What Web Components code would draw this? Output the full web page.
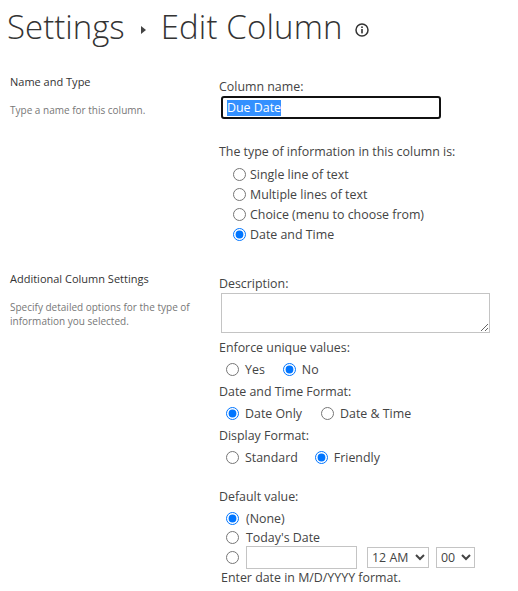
<!DOCTYPE html>
<html lang="en">
<head>
<meta charset="utf-8">
<title>Edit Column</title>
<style>
	html, body { margin: 0; padding: 0; background: #fff; overflow: hidden; }
	body { font-family: "Open Sans", "Noto Sans", sans-serif; color: #444; }
</style>
</head>
<body>
<edit-column-page>
	<page-title slot="title"></page-title>

	<form-section heading="Name and Type" desc="Type a name for this column." style="--section-top: 20px">
		<form-label>Column name:</form-label>
		<name-field value="Due Date"></name-field>
		<form-label style="--label-top: 22px">The type of information in this column is:</form-label>
		<radio-group stacked indent="14" name="type">
			<radio-option>Single line of text</radio-option>
			<radio-option>Multiple lines of text</radio-option>
			<radio-option>Choice (menu to choose from)</radio-option>
			<radio-option checked>Date and Time</radio-option>
		</radio-group>
	</form-section>

	<form-section heading="Additional Column Settings" desc="Specify detailed options for the type of information you selected." style="--section-top: 27px">
		<form-label>Description:</form-label>
		<text-box></text-box>
		<form-label style="--label-top: 4px">Enforce unique values:</form-label>
		<radio-group indent="7" name="unique">
			<radio-option gap="18">Yes</radio-option>
			<radio-option checked>No</radio-option>
		</radio-group>
		<form-label>Date and Time Format:</form-label>
		<radio-group indent="7" name="format">
			<radio-option gap="19" checked>Date Only</radio-option>
			<radio-option>Date &amp; Time</radio-option>
		</radio-group>
		<form-label>Display Format:</form-label>
		<radio-group indent="7" name="display">
			<radio-option gap="17">Standard</radio-option>
			<radio-option checked>Friendly</radio-option>
		</radio-group>
		<form-label style="--label-top: 17px">Default value:</form-label>
		<default-value></default-value>
	</form-section>
</edit-column-page>

<script>
const FONT = '"Open Sans", "Noto Sans", sans-serif';

class EditColumnPage extends HTMLElement {
	constructor() {
		super();
		this.attachShadow({ mode: 'open' });
		this.shadowRoot.innerHTML = `
			<style>
				:host { display: block; width: 518px; height: 591px; overflow: hidden; }
			</style>
			<slot name="title"></slot>
			<slot></slot>
		`;
	}
}

class PageTitle extends HTMLElement {
	constructor() {
		super();
		this.attachShadow({ mode: 'open' });
		this.shadowRoot.innerHTML = `
			<style>
				:host {
					display: flex;
					align-items: center;
					height: 54px;
					padding-left: 7px;
					font: 300 33px/54px ${FONT};
					color: #333;
				}
				.arrow {
					width: 0;
					height: 0;
					margin: 6px 15px 0 16px;
					border-left: 5px solid #444;
					border-top: 4px solid transparent;
					border-bottom: 4px solid transparent;
				}
				.edit { letter-spacing: 0.15px; }
				svg { margin: 5px 0 0 12px; }
			</style>
			<span>Settings</span>
			<span class="arrow"></span>
			<span class="edit">Edit Column</span>
			<svg width="14" height="14" viewBox="0 0 14 14" fill="none">
				<circle cx="7" cy="7" r="6" stroke="#333" stroke-width="1.5"/>
				<rect x="6.2" y="6" width="1.6" height="4.4" fill="#333"/>
				<rect x="6.2" y="3.4" width="1.6" height="1.6" fill="#333"/>
			</svg>
		`;
	}
}

class FormSection extends HTMLElement {
	constructor() {
		super();
		this.attachShadow({ mode: 'open' });
		this.shadowRoot.innerHTML = `
			<style>
				:host {
					display: grid;
					grid-template-columns: 209px 1fr;
					padding-left: 10px;
					margin-top: var(--section-top, 0);
				}
				h3 {
					margin: 0;
					font: 400 11px/16px ${FONT};
					color: #333;
				}
				p {
					margin: 13px 18px 0 0;
					font: 400 10px/14px ${FONT};
					color: #777;
				}
				.body { display: flex; flex-direction: column; padding-top: 2px; }
			</style>
			<div>
				<h3></h3>
				<p></p>
			</div>
			<div class="body"><slot></slot></div>
		`;
		this.shadowRoot.querySelector('h3').textContent = this.getAttribute('heading');
		this.shadowRoot.querySelector('p').textContent = this.getAttribute('desc');
	}
}

class FormLabel extends HTMLElement {
	constructor() {
		super();
		this.attachShadow({ mode: 'open' });
		this.shadowRoot.innerHTML = `
			<style>
				:host {
					display: block;
					box-sizing: border-box;
					height: 20px;
					margin-top: var(--label-top, 0);
					padding-top: 1px;
					font: 400 12.4px/20px ${FONT};
					color: #444;
				}
			</style>
			<slot></slot>
		`;
	}
}

class NameField extends HTMLElement {
	constructor() {
		super();
		this.attachShadow({ mode: 'open' });
		this.shadowRoot.innerHTML = `
			<style>
				:host {
					display: flex;
					align-items: center;
					box-sizing: border-box;
					width: 220px;
					height: 23px;
					margin: 0 0 0 2px;
					padding-left: 4px;
					border: 2px solid #111;
					border-radius: 3px;
					font: 400 12.4px/16px ${FONT};
				}
				span { background: #3390ff; color: #fff; }
			</style>
			<span></span>
		`;
		this.shadowRoot.querySelector('span').textContent = this.getAttribute('value');
	}
}

class TextBox extends HTMLElement {
	constructor() {
		super();
		this.attachShadow({ mode: 'open' });
		this.shadowRoot.innerHTML = `
			<style>
				:host { display: block; margin-left: 2px; height: 40px; }
				textarea {
					display: block;
					box-sizing: border-box;
					width: 269px;
					height: 40px;
					margin: 0;
					border: 1px solid #c4c4c4;
					border-radius: 0;
					outline: none;
				}
			</style>
			<textarea></textarea>
		`;
	}
}

class RadioGroup extends HTMLElement {
	constructor() {
		super();
		this.attachShadow({ mode: 'open' });
		const stacked = this.hasAttribute('stacked');
		this.shadowRoot.innerHTML = `
			<style>
				:host {
					display: flex;
					flex-direction: ${stacked ? 'column' : 'row'};
					margin: ${stacked ? '3px 0 0' : '2px 0'};
					padding-left: ${this.getAttribute('indent') || 0}px;
					--radio-gap: ${stacked ? '4px' : '6px'};
				}
			</style>
			<slot></slot>
		`;
	}
}

class RadioOption extends HTMLElement {
	constructor() {
		super();
		this.attachShadow({ mode: 'open' });
		this.shadowRoot.innerHTML = `
			<style>
				:host {
					display: flex;
					align-items: center;
					height: 20px;
					margin-right: ${this.getAttribute('gap') || 0}px;
					font: 400 12.4px/20px ${FONT};
					color: #444;
				}
				input { width: 13px; height: 13px; margin: 0 var(--radio-gap, 4px) 0 0; flex: none; }
				span { padding-top: 1px; margin-bottom: -1px; }
			</style>
			<input type="radio">
			<span><slot></slot></span>
		`;
		this.shadowRoot.querySelector('input').checked = this.hasAttribute('checked');
	}
}

class DefaultValue extends HTMLElement {
	constructor() {
		super();
		this.attachShadow({ mode: 'open' });
		this.shadowRoot.innerHTML = `
			<style>
				:host {
					display: flex;
					flex-direction: column;
					margin-top: 3px;
					padding-left: 7px;
					font: 400 12.4px/19px ${FONT};
					color: #444;
				}
				.row { display: flex; align-items: center; height: 19px; }
				.date { height: 20px; }
				input[type=radio] { width: 13px; height: 13px; margin: 0 7px 0 0; flex: none; }
				.text {
					box-sizing: border-box;
					flex: none;
					width: 111px;
					height: 23px;
					margin: 0 10px 0 0;
					border: 1px solid #c4c4c4;
					outline: none;
				}
				select {
					box-sizing: border-box;
					flex: none;
					height: 21px;
					padding: 0;
					background: #fff;
					border: 1px solid #c4c4c4;
					border-radius: 0;
					outline: none;
					font: 400 12.4px ${FONT};
					color: #444;
				}
				.hour { width: 62px; margin-right: 7px; }
				.minute { width: 39px; }
				.hint { margin: 1px 0 0 -5px; line-height: 20px; }
			</style>
			<div class="row"><input type="radio" name="d" checked><span>(None)</span></div>
			<div class="row"><input type="radio" name="d"><span>Today's Date</span></div>
			<div class="row date">
				<input type="radio" name="d">
				<input class="text" type="text">
				<select class="hour"><option>12 AM</option></select>
				<select class="minute"><option>00</option></select>
			</div>
			<div class="hint">Enter date in M/D/YYYY format.</div>
		`;
	}
}

customElements.define('edit-column-page', EditColumnPage);
customElements.define('page-title', PageTitle);
customElements.define('form-section', FormSection);
customElements.define('form-label', FormLabel);
customElements.define('name-field', NameField);
customElements.define('text-box', TextBox);
customElements.define('radio-group', RadioGroup);
customElements.define('radio-option', RadioOption);
customElements.define('default-value', DefaultValue);
</script>
</body>
</html>
